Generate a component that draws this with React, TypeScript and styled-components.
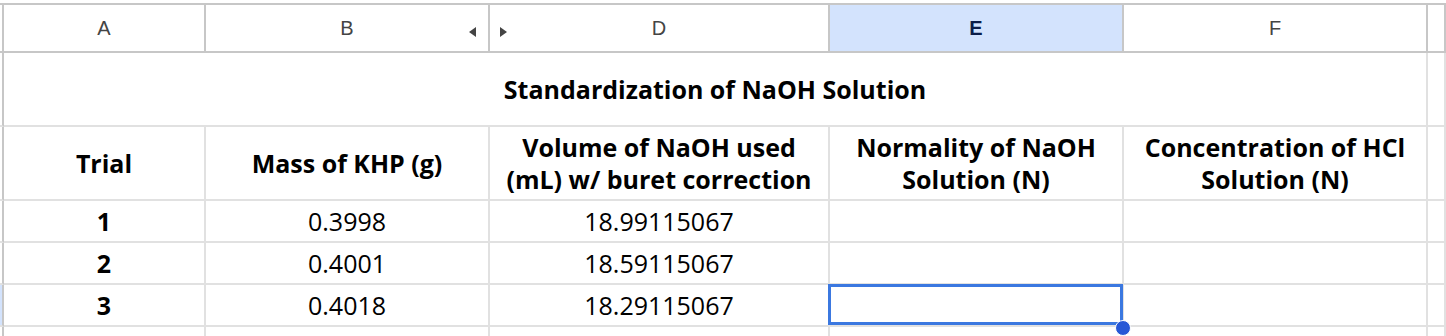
import React from "react";
import styled, { createGlobalStyle, css } from "styled-components";

const GlobalStyle = createGlobalStyle`
  html, body {
    margin: 0;
    padding: 0;
    background: #ffffff;
    overflow: hidden;
  }
`;

const CELL_FONT = `"Open Sans", "Noto Sans", sans-serif`;
const HEAD_FONT = `"Liberation Sans", Arial, sans-serif`;

const Sheet = styled.div`
  display: grid;
  grid-template-columns: 4px 202px 284px 340px 294px 304px 1fr;
  margin-top: 3px;
  border-top: 2px solid #c7c7c7;
  font-family: ${CELL_FONT};
  color: #000;
`;

const ColHead = styled.div<{ $active?: boolean }>`
  position: relative;
  box-sizing: border-box;
  height: 48px;
  display: flex;
  align-items: center;
  justify-content: center;
  border-right: 2px solid #c7c7c7;
  border-bottom: 2px solid #c7c7c7;
  font-family: ${HEAD_FONT};
  font-size: 20px;
  color: #444;
  background: #fff;
  ${(p) =>
    p.$active &&
    css`
      background: #d3e3fd;
      color: #0b1d48;
      font-weight: 700;
    `}
`;

const Corner = styled(ColHead)`
  border-right: 2px solid #c7c7c7;
`;

const Arrow = styled.span<{ $dir: "left" | "right"; $offset: number }>`
  position: absolute;
  top: 22px;
  width: 0;
  height: 0;
  border-top: 5px solid transparent;
  border-bottom: 5px solid transparent;
  ${(p) =>
    p.$dir === "left"
      ? css`
          right: ${p.$offset}px;
          border-right: 7px solid #444;
        `
      : css`
          left: ${p.$offset}px;
          border-left: 7px solid #444;
        `}
`;

const RowHead = styled.div<{ $height: number; $active?: boolean }>`
  box-sizing: border-box;
  height: ${(p) => p.$height}px;
  border-right: 2px solid #c7c7c7;
  border-bottom: 2px solid #e1e1e1;
  background: ${(p) => (p.$active ? "#d3e3fd" : "#fff")};
`;

const Cell = styled.div<{ $height: number; $bold?: boolean; $span?: number }>`
  position: relative;
  box-sizing: border-box;
  height: ${(p) => p.$height}px;
  display: flex;
  align-items: center;
  justify-content: center;
  text-align: center;
  border-right: 2px solid #e1e1e1;
  border-bottom: 2px solid #e1e1e1;
  font-size: 25px;
  line-height: 32px;
  font-weight: ${(p) => (p.$bold ? 700 : 400)};
  ${(p) => p.$span && css`grid-column: span ${p.$span};`}
`;

const Selection = styled.div`
  position: absolute;
  z-index: 2;
  left: -2px;
  top: -1px;
  right: -1px;
  bottom: 0;
  border: 3px solid #3b78e0;
  pointer-events: none;
`;

const FillHandle = styled.span`
  position: absolute;
  right: -11px;
  bottom: -14px;
  width: 14px;
  height: 14px;
  border-radius: 50%;
  background: #2758d6;
  border: 1px solid #fff;
`;

const columns = ["A", "B", "D", "E", "F", ""];

const trials = [
  { n: "1", mass: "0.3998", volume: "18.99115067" },
  { n: "2", mass: "0.4001", volume: "18.59115067" },
  { n: "3", mass: "0.4018", volume: "18.29115067" },
];

export default function App() {
  return (
    <>
      <GlobalStyle />
      <Sheet>
        <Corner />
        {columns.map((c) => (
          <ColHead key={c || "blank"} $active={c === "E"}>
            {c}
            {c === "B" && <Arrow $dir="left" $offset={12} />}
            {c === "D" && <Arrow $dir="right" $offset={10} />}
          </ColHead>
        ))}

        <RowHead $height={74} />
        <Cell $height={74} $bold $span={5}>
          Standardization of NaOH Solution
        </Cell>
        <Cell $height={74} />

        <RowHead $height={74} />
        <Cell $height={74} $bold>Trial</Cell>
        <Cell $height={74} $bold>Mass of KHP (g)</Cell>
        <Cell $height={74} $bold>
          Volume of NaOH used
          <br />
          (mL) w/ buret correction
        </Cell>
        <Cell $height={74} $bold>
          Normality of NaOH
          <br />
          Solution (N)
        </Cell>
        <Cell $height={74} $bold>
          Concentration of HCl
          <br />
          Solution (N)
        </Cell>
        <Cell $height={74} />

        {trials.map((t, i) => {
          const selected = i === trials.length - 1;
          return (
            <React.Fragment key={t.n}>
              <RowHead $height={42} $active={selected} />
              <Cell $height={42} $bold>{t.n}</Cell>
              <Cell $height={42}>{t.mass}</Cell>
              <Cell $height={42}>{t.volume}</Cell>
              <Cell $height={42}>
                {selected && (
                  <Selection>
                    <FillHandle />
                  </Selection>
                )}
              </Cell>
              <Cell $height={42} />
              <Cell $height={42} />
            </React.Fragment>
          );
        })}

        <RowHead $height={42} />
        {columns.map((c) => (
          <Cell key={`empty-${c}`} $height={42} />
        ))}
      </Sheet>
    </>
  );
}
